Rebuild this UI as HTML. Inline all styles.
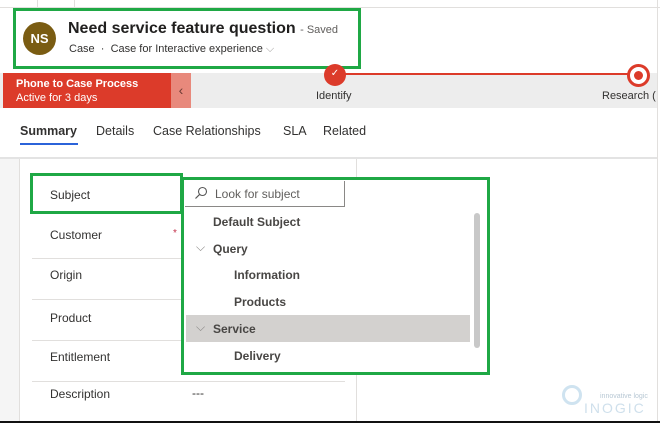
<!DOCTYPE html>
<html><head><style>
*{margin:0;padding:0;box-sizing:border-box}
body{width:660px;height:423px;overflow:hidden;background:#fff;font-family:"Liberation Sans",sans-serif;color:#323130;position:relative}
.a{position:absolute}
.t{position:absolute;white-space:nowrap;font-size:12px}
</style></head><body>
<div class="a" style="left:0;top:7px;width:660px;height:1px;background:#e1dfdd"></div>
<div class="a" style="left:37px;top:0;width:1px;height:7px;background:#e1dfdd"></div>
<div class="a" style="left:74px;top:0;width:1px;height:7px;background:#e1dfdd"></div>
<div class="a" style="left:657px;top:0;width:1px;height:423px;background:#e1dfdd"></div>
<!-- header -->
<div class="a" style="left:13px;top:8px;width:348px;height:61px;border:3px solid #1fa845"></div>
<div class="a" style="left:23px;top:22px;width:33px;height:33px;border-radius:50%;background:#7a5c12;color:#fff;font-weight:bold;font-size:13px;line-height:33px;text-align:center">NS</div>
<div class="t" style="left:68px;top:20px;font-size:16px;font-weight:bold;color:#201f1e">Need service feature question <span style="font-size:11px;font-weight:normal;color:#605e5c">- Saved</span></div>
<div class="t" style="left:69px;top:43px;font-size:11px;color:#323130">Case &nbsp;·&nbsp; Case for Interactive experience <span style="color:#a19f9d">⌵</span></div>
<!-- process bar -->
<div class="a" style="left:0;top:73px;width:657px;height:35px;background:#ededed"></div>
<div class="a" style="left:3px;top:73px;width:168px;height:35px;background:#dc3b2a"></div>
<div class="a" style="left:171px;top:73px;width:20px;height:35px;background:#e8897c;color:#6b3a33;font-size:14px;text-align:center;line-height:34px">‹</div>
<div class="t" style="left:16px;top:78px;font-size:11px;font-weight:bold;color:#fff">Phone to Case Process</div>
<div class="t" style="left:16px;top:92px;font-size:11px;color:#fff">Active for 3 days</div>
<div class="a" style="left:335px;top:73px;width:303px;height:2px;background:#dc3b2a"></div>
<div class="a" style="left:324px;top:64px;width:22px;height:22px;border-radius:50%;background:#dc3b2a;color:#fff;font-size:10px;text-align:center;line-height:20px">✓</div>
<div class="a" style="left:627px;top:64px;width:23px;height:23px;border-radius:50%;background:#fff;border:3px solid #dc3b2a"></div>
<div class="a" style="left:634px;top:71px;width:9px;height:9px;border-radius:50%;background:#dc3b2a"></div>
<div class="t" style="left:316px;top:90px;font-size:11px">Identify</div>
<div class="t" style="left:602px;top:90px;font-size:11px">Research (</div>
<!-- tabs -->
<div class="t" style="left:20px;top:124px;font-size:12.5px;font-weight:bold">Summary</div>
<div class="a" style="left:20px;top:143px;width:58px;height:2px;background:#2b63d9"></div>
<div class="t" style="left:96px;top:124px;font-size:12.5px">Details</div>
<div class="t" style="left:153px;top:124px;font-size:12.5px">Case Relationships</div>
<div class="t" style="left:283px;top:124px;font-size:12.5px">SLA</div>
<div class="t" style="left:323px;top:124px;font-size:12.5px">Related</div>
<div class="a" style="left:0;top:157px;width:657px;height:2px;background:#e3e3e3"></div>
<!-- form -->
<div class="a" style="left:0;top:159px;width:20px;height:262px;background:#f5f5f5;border-right:1px solid #e1dfdd"></div>
<div class="a" style="left:356px;top:159px;width:1px;height:262px;background:#e1dfdd"></div>
<div class="a" style="left:0;top:421px;width:660px;height:2px;background:#111"></div>
<div class="a" style="left:30px;top:173px;width:153px;height:41px;border:3px solid #1fa845"></div>
<div class="t" style="left:50px;top:188px">Subject</div>
<div class="t" style="left:50px;top:228px">Customer</div>
<div class="t" style="left:173px;top:228px;color:#c4314b;font-size:10px">*</div>
<div class="t" style="left:50px;top:268px">Origin</div>
<div class="t" style="left:50px;top:311px">Product</div>
<div class="t" style="left:50px;top:350px">Entitlement</div>
<div class="t" style="left:50px;top:387px">Description</div>
<div class="t" style="left:192px;top:386px">---</div>
<div class="a" style="left:32px;top:258px;width:313px;height:1px;background:#e1dfdd"></div>
<div class="a" style="left:32px;top:299px;width:313px;height:1px;background:#e1dfdd"></div>
<div class="a" style="left:32px;top:340px;width:313px;height:1px;background:#e1dfdd"></div>
<div class="a" style="left:32px;top:381px;width:313px;height:1px;background:#e1dfdd"></div>
<!-- dropdown -->
<div class="a" style="left:181px;top:177px;width:309px;height:198px;border:3px solid #1fa845;background:#fff"></div>
<div class="a" style="left:185px;top:181px;width:160px;height:26px;border:1px solid #8a8886;border-top:none;border-left:none"></div>
<svg class="a" style="left:194px;top:186px" width="14" height="14" viewBox="0 0 14 14"><circle cx="8.5" cy="5.5" r="4" fill="none" stroke="#555" stroke-width="1.1"/><line x1="5.6" y1="8.4" x2="1.5" y2="12.5" stroke="#555" stroke-width="1.2"/></svg>
<div class="t" style="left:215px;top:187px;color:#605e5c">Look for subject</div>
<div class="a" style="left:186px;top:315px;width:284px;height:27px;background:#d3d1cf"></div>
<div class="a" style="left:474px;top:213px;width:6px;height:135px;border-radius:3px;background:#c8c8c8"></div>
<div class="t" style="left:213px;top:215px;font-weight:bold;color:#484644">Default Subject</div>
<div class="t" style="left:196px;top:240px;color:#8a8886">⌵</div>
<div class="t" style="left:213px;top:242px;font-weight:bold;color:#484644">Query</div>
<div class="t" style="left:234px;top:268px;font-weight:bold;color:#484644">Information</div>
<div class="t" style="left:234px;top:295px;font-weight:bold;color:#484644">Products</div>
<div class="t" style="left:196px;top:320px;color:#8a8886">⌵</div>
<div class="t" style="left:213px;top:322px;font-weight:bold;color:#484644">Service</div>
<div class="t" style="left:234px;top:349px;font-weight:bold;color:#484644">Delivery</div>
<!-- logo -->
<div class="a" style="left:562px;top:385px;width:20px;height:20px;border-radius:50%;border:3px solid #cfe3f0"></div>
<div class="t" style="left:600px;top:393px;font-size:7px;color:#b8c8d4">innovative logic</div>
<div class="t" style="left:584px;top:400px;font-size:14px;letter-spacing:2px;color:#cfe0ec">INOGIC</div>
</body></html>
